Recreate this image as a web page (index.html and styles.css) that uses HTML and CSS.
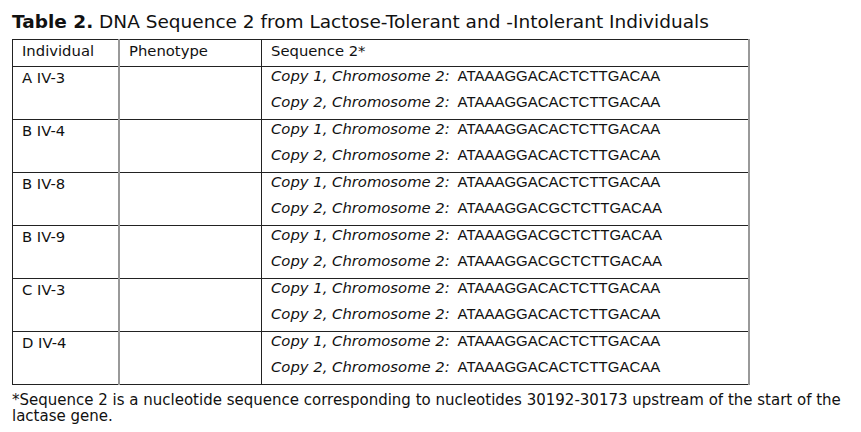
FILE: index.html
```html
<!DOCTYPE html>
<html>
<head>
<meta charset="utf-8">
<link rel="stylesheet" href="styles.css">
</head>
<body>
<div class="page">
  <div class="title"><b>Table 2.</b> DNA Sequence 2 from Lactose-Tolerant and -Intolerant Individuals</div>
  <table class="dna">
    <thead>
      <tr><th class="c1">Individual</th><th class="c2">Phenotype</th><th class="c3">Sequence 2*</th></tr>
    </thead>
    <tbody>
      <tr><td class="c1">A IV-3</td><td class="c2"></td><td class="c3">
        <div class="seq"><i>Copy 1, Chromosome 2:</i> <span class="nt">ATAAAGGACACTCTTGACAA</span></div>
        <div class="seq"><i>Copy 2, Chromosome 2:</i> <span class="nt">ATAAAGGACACTCTTGACAA</span></div></td></tr>
      <tr><td class="c1">B IV-4</td><td class="c2"></td><td class="c3">
        <div class="seq"><i>Copy 1, Chromosome 2:</i> <span class="nt">ATAAAGGACACTCTTGACAA</span></div>
        <div class="seq"><i>Copy 2, Chromosome 2:</i> <span class="nt">ATAAAGGACACTCTTGACAA</span></div></td></tr>
      <tr><td class="c1">B IV-8</td><td class="c2"></td><td class="c3">
        <div class="seq"><i>Copy 1, Chromosome 2:</i> <span class="nt">ATAAAGGACACTCTTGACAA</span></div>
        <div class="seq"><i>Copy 2, Chromosome 2:</i> <span class="nt">ATAAAGGACGCTCTTGACAA</span></div></td></tr>
      <tr><td class="c1">B IV-9</td><td class="c2"></td><td class="c3">
        <div class="seq"><i>Copy 1, Chromosome 2:</i> <span class="nt">ATAAAGGACGCTCTTGACAA</span></div>
        <div class="seq"><i>Copy 2, Chromosome 2:</i> <span class="nt">ATAAAGGACGCTCTTGACAA</span></div></td></tr>
      <tr><td class="c1">C IV-3</td><td class="c2"></td><td class="c3">
        <div class="seq"><i>Copy 1, Chromosome 2:</i> <span class="nt">ATAAAGGACACTCTTGACAA</span></div>
        <div class="seq"><i>Copy 2, Chromosome 2:</i> <span class="nt">ATAAAGGACACTCTTGACAA</span></div></td></tr>
      <tr><td class="c1">D IV-4</td><td class="c2"></td><td class="c3">
        <div class="seq"><i>Copy 1, Chromosome 2:</i> <span class="nt">ATAAAGGACACTCTTGACAA</span></div>
        <div class="seq"><i>Copy 2, Chromosome 2:</i> <span class="nt">ATAAAGGACACTCTTGACAA</span></div></td></tr>
    </tbody>
  </table>
  <p class="note">*Sequence 2 is a nucleotide sequence corresponding to nucleotides 30192-30173 upstream of the start of the lactase gene.</p>
</div>
</body>
</html>
```
FILE: styles.css
```css
html, body {
  margin: 0;
  padding: 0;
  background: #ffffff;
}
body {
  font-family: "DejaVu Sans", Verdana, sans-serif;
  font-size: 14.8px;
  color: #111111;
}
.page {
  padding: 12px 12px 0 12px;
}
.title {
  font-size: 18.5px;
  line-height: 20px;
  margin-bottom: 7px;
}
.title b {
  font-weight: bold;
}
.dna {
  border-collapse: collapse;
  width: 738px;
  border-left: 1px solid #222222;
  border-top: 1px solid #222222;
  border-bottom: 1px solid #222222;
  border-right: 2px solid #999999;
}
.dna th, .dna td {
  font-weight: normal;
  text-align: left;
  vertical-align: top;
  line-height: 18px;
  padding: 2px 9px 6px 9px;
  border-bottom: 1px solid #222222;
}
.dna th.c1, .dna td.c1 {
  width: 87px;
  border-right: 2px solid #999999;
}
.dna th.c2, .dna td.c2 {
  width: 123px;
  border-right: 1px solid #222222;
}
.dna td.c3 {
  padding: 0 9px 0 9px;
}
.seq {
  height: 18px;
  margin-bottom: 8px;
  white-space: nowrap;
}
.seq i {
  font-style: italic;
}
.nt {
  font-family: "Liberation Sans", Arial, sans-serif;
  font-size: 15px;
  margin-left: 3px;
}
.note {
  margin: 7px 0 0 0;
  font-size: 15px;
  line-height: 16px;
}
```
